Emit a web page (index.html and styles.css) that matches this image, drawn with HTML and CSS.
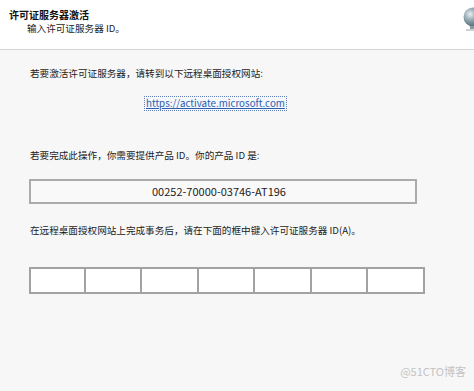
FILE: index.html
```html
<!DOCTYPE html>
<html lang="zh-CN">
<head>
<meta charset="utf-8">
<title>许可证服务器激活</title>
<link rel="stylesheet" href="styles.css">
</head>
<body>
<div class="header">
  <div class="title">许可证服务器激活</div>
  <div class="subtitle">输入许可证服务器 ID。</div>
  <svg class="server-icon" width="20" height="28" viewBox="0 0 20 28">
    <defs>
      <radialGradient id="g" cx="35%" cy="35%" r="70%">
        <stop offset="0" stop-color="#e8eef2"/>
        <stop offset="0.5" stop-color="#8ea3ae"/>
        <stop offset="1" stop-color="#4d6570"/>
      </radialGradient>
    </defs>
    <circle cx="11" cy="11" r="9.5" fill="url(#g)"/>
    <rect x="8" y="20" width="6" height="3" fill="#8a9aa2"/>
    <rect x="4" y="23" width="14" height="2" fill="#c9d1d5"/>
  </svg>
</div>
<div class="content">
  <p class="line first">若要激活许可证服务器，请转到以下远程桌面授权网站:</p>
  <div class="link-row"><a class="link" href="#">https://activate.microsoft.com</a></div>
  <p class="line second">若要完成此操作，你需要提供产品 ID。你的产品 ID 是:</p>
  <div class="product-id">00252-70000-03746-AT196</div>
  <p class="line third">在远程桌面授权网站上完成事务后，请在下面的框中键入许可证服务器 ID(A)。</p>
  <div class="id-boxes">
    <div class="id-box"></div>
    <div class="id-box"></div>
    <div class="id-box"></div>
    <div class="id-box"></div>
    <div class="id-box"></div>
    <div class="id-box"></div>
    <div class="id-box"></div>
  </div>
</div>
<div class="watermark">@51CTO博客</div>
</body>
</html>
```

FILE: styles.css
```css
html, body {
  margin: 0;
  padding: 0;
}
body {
  width: 474px;
  height: 391px;
  overflow: hidden;
  position: relative;
  background: #f7f7f7;
  font-family: "Noto Sans CJK SC", "Noto Sans", sans-serif;
  font-size: 9.6px;
  color: #1c1c1c;
}
.header {
  position: relative;
  height: 50px;
  box-sizing: border-box;
  background: #ffffff;
  border-bottom: 1px solid #d6d6d6;
  padding-top: 9px;
}
.title {
  margin-left: 9px;
  font-size: 10px;
  line-height: 12px;
  font-weight: bold;
  color: #111;
}
.subtitle {
  margin-left: 27px;
  margin-top: 1px;
  line-height: 12px;
}
.server-icon {
  position: absolute;
  right: -8px;
  top: 6px;
}
.content {
  padding-left: 30px;
  width: 395px;
}
.line {
  margin: 0;
  line-height: 14px;
}
.first {
  margin-top: 16px;
}
.link-row {
  margin-top: 16px;
  margin-left: 114px;
  line-height: 13px;
}
.link {
  display: inline-block;
  color: #2a5db0;
  text-decoration: underline;
  border: 1px dotted #5f7fb5;
  padding: 0 1px;
  font-size: 9.8px;
  background: #f4f7fc;
}
.second {
  margin-top: 37px;
}
.product-id {
  margin-top: 17px;
  margin-left: -1px;
  width: 388px;
  height: 25px;
  box-sizing: border-box;
  border: 2px solid #ababab;
  background: #f9f9f9;
  text-align: center;
  line-height: 21px;
  font-size: 11px;
  padding-right: 8px;
}
.third {
  margin-top: 19px;
}
.id-boxes {
  display: flex;
  margin-top: 30px;
  margin-left: -1px;
}
.id-box {
  width: 58.5px;
  height: 27px;
  box-sizing: border-box;
  border: 2px solid #a2a2a2;
  background: #ffffff;
  margin-left: -2px;
}
.id-box:first-child {
  margin-left: 0;
  width: 56.5px;
}
.watermark {
  position: absolute;
  right: 8px;
  bottom: 12px;
  color: #c4c4c4;
  font-size: 11px;
}
```
